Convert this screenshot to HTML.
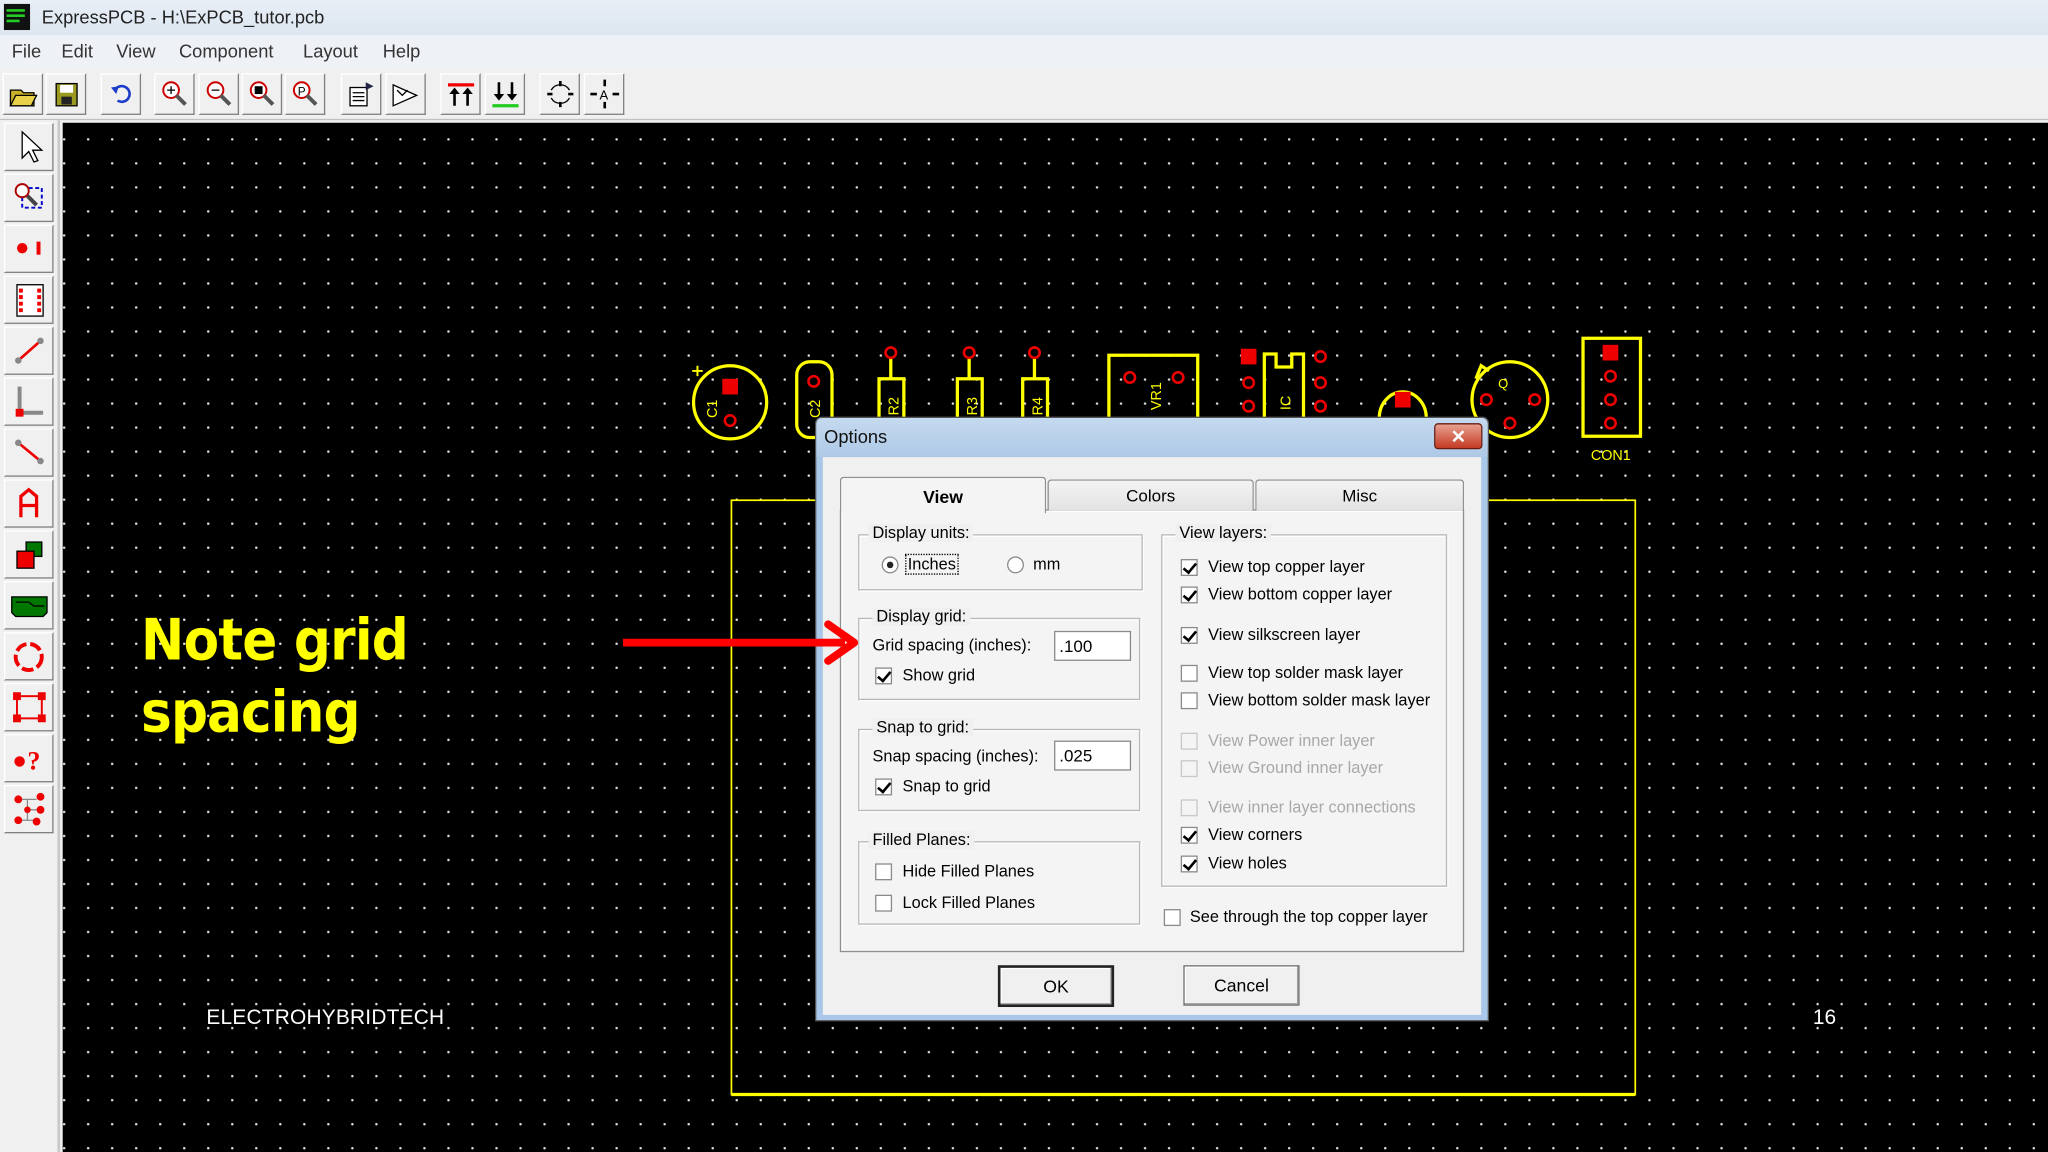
<!DOCTYPE html>
<html><head><meta charset="utf-8"><style>
*{margin:0;padding:0;box-sizing:border-box}
html,body{width:2048px;height:1152px;overflow:hidden;background:#000}
#w{position:absolute;left:0;top:0;width:1568px;height:882px;transform:scale(1.306122);transform-origin:0 0;font-family:"Liberation Sans",sans-serif;background:#f0f0f0}
.a{position:absolute}
.tb{position:absolute;top:56px;width:31px;height:32px;background:#f0f0f0;border:1px solid;border-color:#fff #808080 #808080 #fff}
.lb{position:absolute;left:3px;width:38px;height:37px;background:#f0f0f0;border:1px solid;border-color:#fff #808080 #808080 #fff}
.d{font-size:13px;color:#000}
.grp{position:absolute;border:1px solid #b8b8b8;box-shadow:1px 1px 0 #fff inset,1px 1px 0 #fff}
.gl{position:absolute;top:-9px;background:#f0f0f0;padding:0 3px;font-size:12.5px}
.cb{position:absolute;width:13px;height:13px;border:1px solid #8a8a8a;background:#fff}
.cb.k::after{content:"";position:absolute;left:3px;top:0px;width:4px;height:8px;border:solid #000;border-width:0 2px 2px 0;transform:rotate(40deg)}
.cb.g{border-color:#c8c8c8;background:#f4f4f4}
.lt{position:absolute;font-size:12.5px;white-space:nowrap}
.gr{color:#a8a8a8}
.btn{position:absolute;background:#f0f0f0;border:1px solid #707070;box-shadow:inset -1px -1px 0 #a0a0a0,inset 1px 1px 0 #fff;font-size:13.5px;text-align:center;line-height:29px}
</style></head><body><div id="w">
<div class="a" style="left:0;top:0;width:1568px;height:27px;background:linear-gradient(#e8eef6,#dde6f1)"></div>
<div class="a" style="left:3px;top:3px;width:20px;height:20px;background:#111"><svg width="20" height="20"><path d="M2 5h14M2 9h14M2 13h10" stroke="#2c2" stroke-width="2"/></svg></div>
<div class="a" style="left:32px;top:5px;font-size:14px;color:#222">ExpressPCB - H:\ExPCB_tutor.pcb</div>
<div class="a" style="left:0;top:27px;width:1568px;height:24px;background:#eef1f6"></div>
<div class="a" style="top:31px;font-size:14px;color:#333;left:9px">File</div>
<div class="a" style="top:31px;font-size:14px;color:#333;left:47px">Edit</div>
<div class="a" style="top:31px;font-size:14px;color:#333;left:89px">View</div>
<div class="a" style="top:31px;font-size:14px;color:#333;left:137px">Component</div>
<div class="a" style="top:31px;font-size:14px;color:#333;left:232px">Layout</div>
<div class="a" style="top:31px;font-size:14px;color:#333;left:293px">Help</div>
<div class="a" style="left:0;top:52px;width:1568px;height:40px;background:#f0f0f0;border-bottom:1px solid #c0c0c0"></div>
<div class="tb" style="left:2px"><svg width="29" height="30"><path d="M5 12h8l2 2h8v10H5z" fill="#c9b02a" stroke="#000"/><path d="M5 24l4-8h16l-4 8z" fill="#e8d24a" stroke="#000"/></svg></div>
<div class="tb" style="left:35px"><svg width="29" height="30"><rect x="7" y="7" width="16" height="17" fill="#9a9a20" stroke="#000"/><rect x="10" y="8" width="10" height="6" fill="#fff"/><rect x="11" y="17" width="8" height="6" fill="#222"/></svg></div>
<div class="tb" style="left:77px"><svg width="29" height="30"><path d="M10 12a6 6 0 1 1 2 8" fill="none" stroke="#1a3cc8" stroke-width="2"/><path d="M7 10l4 5 2-6z" fill="#1a3cc8"/></svg></div>
<div class="tb" style="left:118px"><svg width="29" height="30"><circle cx="12" cy="12" r="6" fill="#fff" stroke="#c00" stroke-width="1.5"/><path d="M16 16l7 7" stroke="#555" stroke-width="3"/><path d="M9 12h6M12 9v6" stroke="#000"/></svg></div>
<div class="tb" style="left:152px"><svg width="29" height="30"><circle cx="12" cy="12" r="6" fill="#fff" stroke="#c00" stroke-width="1.5"/><path d="M16 16l7 7" stroke="#555" stroke-width="3"/><path d="M9 12h6" stroke="#000"/></svg></div>
<div class="tb" style="left:185px"><svg width="29" height="30"><circle cx="12" cy="12" r="6" fill="#fff" stroke="#c00" stroke-width="1.5"/><path d="M16 16l7 7" stroke="#555" stroke-width="3"/><rect x="9" y="9" width="6" height="6"/></svg></div>
<div class="tb" style="left:218px"><svg width="29" height="30"><circle cx="12" cy="12" r="6" fill="#fff" stroke="#c00" stroke-width="1.5"/><path d="M16 16l7 7" stroke="#555" stroke-width="3"/><text x="9" y="16" font-size="9" font-family="Liberation Sans">P</text></svg></div>
<div class="tb" style="left:261px"><svg width="29" height="30"><rect x="6" y="10" width="13" height="14" fill="#fff" stroke="#000"/><path d="M8 14h9M8 17h9M8 20h9" stroke="#000"/><path d="M18 6l6 3-6 3z" fill="#224"/></svg></div>
<div class="tb" style="left:295px"><svg width="29" height="30"><path d="M5 8l18 8-18 8z" fill="#fff" stroke="#000"/><path d="M8 12l4 4 4-4" stroke="#000" fill="none"/></svg></div>
<div class="tb" style="left:337px"><svg width="29" height="30"><path d="M5 8h20" stroke="#e00" stroke-width="2.5"/><path d="M10 24V12M20 24V12" stroke="#000" stroke-width="2"/><path d="M6 15l4-5 4 5zM16 15l4-5 4 5z"/></svg></div>
<div class="tb" style="left:371px"><svg width="29" height="30"><path d="M5 24h20" stroke="#2c2" stroke-width="2.5"/><path d="M10 6v12M20 6v12" stroke="#000" stroke-width="2"/><path d="M6 15l4 5 4-5zM16 15l4 5 4-5z"/></svg></div>
<div class="tb" style="left:413px"><svg width="29" height="30"><path d="M15 5v4M15 21v4M5 15h4M21 15h4" stroke="#000" stroke-width="2"/><path d="M8 12a8 8 0 0 1 14 0M8 18a8 8 0 0 0 14 0" fill="none" stroke="#000"/></svg></div>
<div class="tb" style="left:447px"><svg width="29" height="30"><path d="M15 4v5M15 21v5M4 15h5M21 15h5" stroke="#000" stroke-width="2"/><text x="11" y="19" font-size="10" font-family="Liberation Sans">A</text></svg></div>
<div class="a" style="left:0;top:92px;width:46px;height:790px;background:#f0f0f0;border-right:2px solid #c8c8c8"></div>
<div class="lb" style="top:94px"><svg width="36" height="35"><path d="M13 6v20l5-5 4 8 3-1-4-8h7z" fill="#fff" stroke="#000"/></svg></div>
<div class="lb" style="top:133px"><svg width="36" height="35"><rect x="13" y="10" width="15" height="15" fill="none" stroke="#00c" stroke-dasharray="3 2" stroke-width="1.5"/><circle cx="13" cy="12" r="5" fill="#fff" stroke="#a00" stroke-width="1.5"/><path d="M17 16l7 7" stroke="#444" stroke-width="3"/></svg></div>
<div class="lb" style="top:172px"><svg width="36" height="35"><circle cx="13" cy="17" r="4" fill="#e00"/><rect x="24" y="12" width="3" height="10" fill="#e00"/></svg></div>
<div class="lb" style="top:211px"><svg width="36" height="35"><rect x="9" y="6" width="20" height="24" fill="#fff" stroke="#000"/><path d="M12 9v18M26 9v18" stroke="#e00" stroke-width="3" stroke-dasharray="3 2"/></svg></div>
<div class="lb" style="top:250px"><svg width="36" height="35"><path d="M10 25L27 10" stroke="#e00" stroke-width="2"/><circle cx="10" cy="25" r="2.5" fill="#888"/><circle cx="27" cy="10" r="2.5" fill="#888"/></svg></div>
<div class="lb" style="top:289px"><svg width="36" height="35"><path d="M11 6v20h18" stroke="#888" stroke-width="3" fill="none"/><rect x="8" y="23" width="6" height="6" fill="#e00"/></svg></div>
<div class="lb" style="top:328px"><svg width="36" height="35"><path d="M10 10l17 14" stroke="#e00" stroke-width="2"/><circle cx="10" cy="10" r="2.5" fill="#888"/><circle cx="27" cy="24" r="2.5" fill="#888"/></svg></div>
<div class="lb" style="top:367px"><svg width="36" height="35"><path d="M12 28V12l6-5 6 5v16M12 19h12" stroke="#e00" stroke-width="2.5" fill="none"/></svg></div>
<div class="lb" style="top:406px"><svg width="36" height="35"><rect x="16" y="8" width="12" height="11" fill="#070" stroke="#000"/><rect x="9" y="15" width="13" height="13" fill="#e00" stroke="#000"/></svg></div>
<div class="lb" style="top:445px"><svg width="36" height="35"><path d="M5 11h27v12l-3 3H8l-3-3z" fill="#070" stroke="#000"/><path d="M8 15h10l4 3h8" stroke="#000" fill="none"/></svg></div>
<div class="lb" style="top:484px"><svg width="36" height="35"><circle cx="18" cy="18" r="10" fill="none" stroke="#e00" stroke-width="3" stroke-dasharray="9 3"/></svg></div>
<div class="lb" style="top:523px"><svg width="36" height="35"><rect x="9" y="9" width="19" height="17" fill="none" stroke="#e00" stroke-width="1.5"/><g fill="#e00"><rect x="6" y="6" width="6" height="6"/><rect x="25" y="6" width="6" height="6"/><rect x="6" y="23" width="6" height="6"/><rect x="25" y="23" width="6" height="6"/></g></svg></div>
<div class="lb" style="top:562px"><svg width="36" height="35"><circle cx="11" cy="20" r="4" fill="#e00"/><text x="17" y="26" font-size="20" fill="#e00" font-family="Liberation Serif" font-weight="bold">?</text></svg></div>
<div class="lb" style="top:601px"><svg width="36" height="35"><path d="M10 10h14M17 10v16M17 18h10M10 26h14" stroke="#888"/><g fill="#e00"><circle cx="10" cy="10" r="3"/><circle cx="27" cy="8" r="3"/><circle cx="27" cy="18" r="3"/><circle cx="10" cy="26" r="3"/><circle cx="24" cy="27" r="3"/><circle cx="17" cy="18" r="2.5"/></g></svg></div>
<div class="a" style="left:48px;top:94px;width:1520px;height:788px;background-color:#000;background-image:radial-gradient(circle,#ddd 0.8px,transparent 1.1px);background-size:18.4px 18.4px;background-position:-8.1px 3.5px"></div>
<svg class="a" style="left:0;top:0" width="1568" height="882">
<g fill="none" stroke="#ff0" stroke-width="2.5">
<circle cx="559" cy="308" r="28"/>
<path d="M530 284h8M534 280v8" stroke-width="1.5"/>
<rect x="610" y="277" width="27" height="58" rx="10"/>
<path d="M682 274v16M742 274v16M792 274v16"/>
<rect x="673" y="290" width="19" height="40"/><rect x="733" y="290" width="19" height="40"/><rect x="783" y="290" width="19" height="40"/>
<path d="M849 320v-48h68v48"/>
<path d="M968 320v-49h9v10h12v-10h9v49"/>
<path d="M1056 320a18 20 0 0 1 36 0"/>
<circle cx="1156" cy="306" r="29"/><path d="M1130 290l4-10 6 4"/>
<rect x="1212" y="259" width="44" height="75"/>
<rect x="560" y="383" width="692" height="455" stroke-width="1.3"/>
<path d="M560 838h692" stroke-width="2.5"/>
</g>
<g fill="none" stroke="#e00" stroke-width="2">
<circle cx="559" cy="322" r="4"/><circle cx="623" cy="292" r="4"/><circle cx="682" cy="270" r="4"/><circle cx="742" cy="270" r="4"/><circle cx="792" cy="270" r="4"/>
<circle cx="865" cy="289" r="4"/><circle cx="902" cy="289" r="4"/>
<circle cx="956" cy="293" r="4"/><circle cx="956" cy="311" r="4"/><circle cx="1011" cy="273" r="4"/><circle cx="1011" cy="293" r="4"/><circle cx="1011" cy="311" r="4"/>
<circle cx="1138" cy="306" r="4"/><circle cx="1175" cy="306" r="4"/><circle cx="1156" cy="324" r="4"/>
<circle cx="1233" cy="288" r="4"/><circle cx="1233" cy="306" r="4"/><circle cx="1233" cy="324" r="4"/>
</g>
<g fill="#e00"><rect x="553" y="290" width="12" height="12"/><rect x="950" y="267" width="12" height="12"/><rect x="1068" y="300" width="12" height="12"/><rect x="1227" y="264" width="12" height="12"/></g>
<g fill="#ff0" font-family="Liberation Sans" font-size="11">
<text transform="translate(549,320) rotate(-90)">C1</text><text transform="translate(628,320) rotate(-90)">C2</text>
<text transform="translate(688,318) rotate(-90)">R2</text><text transform="translate(748,318) rotate(-90)">R3</text><text transform="translate(798,318) rotate(-90)">R4</text>
<text transform="translate(889,314) rotate(-90)">VR1</text><text transform="translate(988,314) rotate(-90)">IC</text>
<text x="1147" y="297" font-size="10">Q</text><text x="1218" y="352">CON1</text>
</g>
<text x="108" y="505" fill="#ff0" font-size="44" font-weight="bold" font-family="DejaVu Sans Condensed,Liberation Sans" textLength="205">Note grid</text>
<text x="108" y="560" fill="#ff0" font-size="44" font-weight="bold" font-family="DejaVu Sans Condensed,Liberation Sans" textLength="168">spacing</text>
<text x="158" y="784" fill="#fff" font-size="16" font-family="Liberation Sans" textLength="182">ELECTROHYBRIDTECH</text>
<text x="1388" y="784" fill="#fff" font-size="16" font-family="Liberation Sans">16</text>
</svg>
<div class="a" style="left:624px;top:319px;width:516px;height:463px;background:#a9c7e8;border:1px solid #555;border-radius:5px 5px 0 0"></div>
<div class="a" style="left:625px;top:320px;width:514px;height:30px;background:linear-gradient(#c5daf0,#aec9e6);border-radius:5px 5px 0 0"></div>
<div class="a" style="left:631px;top:326px;font-size:14px;color:#111">Options</div>
<div class="a" style="left:1098px;top:324px;width:37px;height:20px;background:linear-gradient(#e8a090,#c43b24);border:1px solid #6a1d10;border-radius:3px;color:#fff;font-weight:bold;font-size:14px;text-align:center;line-height:18px">✕</div>
<div class="a d" style="left:630px;top:350px;width:504px;height:427px;background:#f0f0f0">
 <div class="a" style="left:13px;top:40px;width:478px;height:339px;border:1px solid #8e8f8f;background:#f4f4f4;box-shadow:inset 1px 1px 0 #fff"></div>
 <div class="a" style="left:172px;top:17px;width:158px;height:24px;border:1px solid #8e8f8f;border-bottom:none;border-radius:3px 3px 0 0;background:linear-gradient(#f4f4f4,#e2e2e2);text-align:center;line-height:24px;font-size:13px">Colors</div>
 <div class="a" style="left:331px;top:17px;width:160px;height:24px;border:1px solid #8e8f8f;border-bottom:none;border-radius:3px 3px 0 0;background:linear-gradient(#f4f4f4,#e2e2e2);text-align:center;line-height:24px;font-size:13px">Misc</div>
 <div class="a" style="left:13px;top:15px;width:158px;height:28px;border:1px solid #8e8f8f;border-bottom:none;border-radius:3px 3px 0 0;background:#f4f4f4;text-align:center;line-height:30px;font-weight:bold;font-size:13.5px">View</div>
 <div class="grp" style="left:27px;top:59px;width:218px;height:43px"><span class="gl" style="left:7px">Display units:</span></div>
 <div class="a" style="left:45px;top:76px;width:13px;height:13px;border-radius:50%;border:1px solid #8a8a8a;background:#fff"><div style="position:absolute;left:3px;top:3px;width:5px;height:5px;border-radius:50%;background:#222"></div></div>
 <div class="lt" style="left:63px;top:74px;border:1px dotted #000;padding:0 1px">Inches</div>
 <div class="a" style="left:141px;top:76px;width:13px;height:13px;border-radius:50%;border:1px solid #8a8a8a;background:#fff"></div>
 <div class="lt" style="left:161px;top:75px">mm</div>
 <div class="grp" style="left:27px;top:123px;width:216px;height:63px"><span class="gl" style="left:10px">Display grid:</span></div>
 <div class="lt" style="left:38px;top:137px">Grid spacing (inches):</div>
 <div class="a" style="left:177px;top:133px;width:59px;height:23px;background:#fff;border:1px solid #8a8a8a;font-size:13px;padding:3px 0 0 3px">.100</div>
 <div class="cb k" style="left:40px;top:161px"></div><div class="lt" style="left:61px;top:160px">Show grid</div>
 <div class="grp" style="left:27px;top:208px;width:216px;height:63px"><span class="gl" style="left:10px">Snap to grid:</span></div>
 <div class="lt" style="left:38px;top:222px">Snap spacing (inches):</div>
 <div class="a" style="left:177px;top:217px;width:59px;height:23px;background:#fff;border:1px solid #8a8a8a;font-size:13px;padding:3px 0 0 3px">.025</div>
 <div class="cb k" style="left:40px;top:246px"></div><div class="lt" style="left:61px;top:245px">Snap to grid</div>
 <div class="grp" style="left:27px;top:294px;width:216px;height:64px"><span class="gl" style="left:7px">Filled Planes:</span></div>
 <div class="cb" style="left:40px;top:311px"></div><div class="lt" style="left:61px;top:310px">Hide Filled Planes</div>
 <div class="cb" style="left:40px;top:335px"></div><div class="lt" style="left:61px;top:334px">Lock Filled Planes</div>
 <div class="grp" style="left:259px;top:59px;width:219px;height:270px"><span class="gl" style="left:10px">View layers:</span></div>
 <div class="cb k" style="left:274px;top:78px"></div><div class="lt" style="left:295px;top:77px">View top copper layer</div>
 <div class="cb k" style="left:274px;top:99px"></div><div class="lt" style="left:295px;top:98px">View bottom copper layer</div>
 <div class="cb k" style="left:274px;top:130px"></div><div class="lt" style="left:295px;top:129px">View silkscreen layer</div>
 <div class="cb" style="left:274px;top:159px"></div><div class="lt" style="left:295px;top:158px">View top solder mask layer</div>
 <div class="cb" style="left:274px;top:180px"></div><div class="lt" style="left:295px;top:179px">View bottom solder mask layer</div>
 <div class="cb g" style="left:274px;top:211px"></div><div class="lt gr" style="left:295px;top:210px">View Power inner layer</div>
 <div class="cb g" style="left:274px;top:232px"></div><div class="lt gr" style="left:295px;top:231px">View Ground inner layer</div>
 <div class="cb g" style="left:274px;top:262px"></div><div class="lt gr" style="left:295px;top:261px">View inner layer connections</div>
 <div class="cb k" style="left:274px;top:283px"></div><div class="lt" style="left:295px;top:282px">View corners</div>
 <div class="cb k" style="left:274px;top:305px"></div><div class="lt" style="left:295px;top:304px">View holes</div>
 <div class="cb" style="left:261px;top:346px"></div><div class="lt" style="left:281px;top:345px">See through the top copper layer</div>
 <div class="btn" style="left:134px;top:389px;width:89px;height:32px;border:2px solid #222">OK</div>
 <div class="btn" style="left:276px;top:389px;width:89px;height:31px">Cancel</div>
</div>
<svg class="a" style="left:0;top:0" width="1568" height="882">
<path d="M477 492h170" stroke="#f00" stroke-width="6"/><path d="M634 478l20 14-20 14" stroke="#f00" stroke-width="6" fill="none" stroke-linecap="round" stroke-linejoin="round"/>
</svg>
</div></body></html>
